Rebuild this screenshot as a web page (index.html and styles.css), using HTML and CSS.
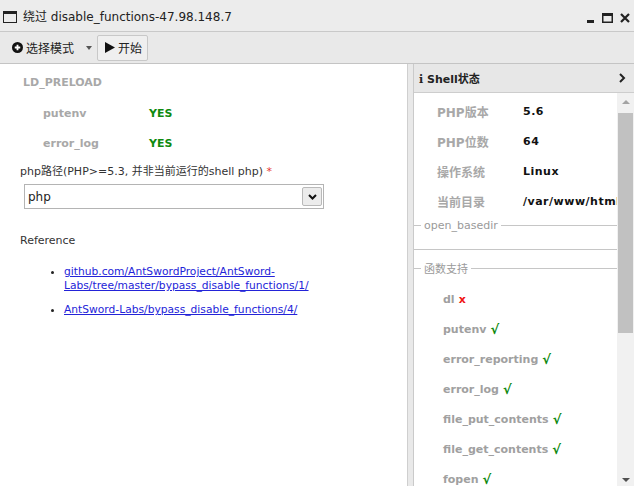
FILE: index.html
```html
<!DOCTYPE html>
<html lang="zh-CN">
<head>
    <meta charset="UTF-8">
    <title>绕过 disable_functions</title>
    <link rel="stylesheet" href="styles.css">
</head>
<body>
    <div class="window">
        <div class="titlebar">
            <svg class="win-icon" width="14" height="12" viewBox="0 0 14 12">
                <rect x="0.5" y="0.5" width="13" height="11" fill="none" stroke="#222"/>
                <rect x="0" y="0" width="14" height="3" fill="#222"/>
            </svg>
            <span class="title">绕过 disable_functions-47.98.148.7</span>
            <div class="controls">
                <svg width="8" height="10" viewBox="0 0 8 10"><rect x="0" y="7" width="7" height="3" fill="#222"/></svg>
                <svg width="11" height="10" viewBox="0 0 11 10">
                    <rect x="0.75" y="0.75" width="9.5" height="8.5" fill="none" stroke="#222" stroke-width="1.5"/>
                    <rect x="0" y="0" width="11" height="3" fill="#222"/>
                </svg>
                <svg width="10" height="10" viewBox="0 0 10 10"><path d="M1 1L9 9M9 1L1 9" stroke="#222" stroke-width="2.2"/></svg>
            </div>
        </div>

        <div class="toolbar">
            <div class="tb-menu">
                <svg width="11" height="11" viewBox="0 0 12 12">
                    <circle cx="6" cy="6" r="6" fill="#111"/>
                    <path d="M6 3v6M3 6h6" stroke="#fff" stroke-width="2"/>
                </svg>
                <span>选择模式</span>
                <span class="caret"></span>
            </div>
            <div class="tb-btn">
                <svg width="10" height="11" viewBox="0 0 10 11"><path d="M0 0L10 5.5L0 11Z" fill="#111"/></svg>
                <span>开始</span>
            </div>
        </div>

        <div class="main">
            <div class="left">
                <div class="section-title">LD_PRELOAD</div>
                <div class="check-row">
                    <span class="check-name">putenv</span>
                    <span class="yes">YES</span>
                </div>
                <div class="check-row">
                    <span class="check-name">error_log</span>
                    <span class="yes">YES</span>
                </div>

                <div class="field-label">php路径(PHP&gt;=5.3, 并非当前运行的shell php) <span class="req">*</span></div>
                <div class="select">
                    <span>php</span>
                    <span class="select-btn">
                        <svg width="9" height="6" viewBox="0 0 9 6"><path d="M1 1L4.5 4.5L8 1" fill="none" stroke="#111" stroke-width="2"/></svg>
                    </span>
                </div>

                <div class="ref-title">Reference</div>
                <ul class="ref-list">
                    <li><a href="#">github.com/AntSwordProject/AntSword-<br>Labs/tree/master/bypass_disable_functions/1/</a></li>
                    <li><a href="#">AntSword-Labs/bypass_disable_functions/4/</a></li>
                </ul>
            </div>

            <div class="splitter"></div>

            <div class="right">
                <div class="panel-head">
                    <span class="panel-title"><b class="info">i</b> Shell状态</span>
                    <svg width="7" height="10" viewBox="0 0 7 10"><path d="M1 1L5 5L1 9" fill="none" stroke="#222" stroke-width="2"/></svg>
                </div>
                <div class="panel-body">
                    <div class="panel-content">
                        <div class="info-row"><span class="info-key">PHP版本</span><span class="info-val">5.6</span></div>
                        <div class="info-row"><span class="info-key">PHP位数</span><span class="info-val">64</span></div>
                        <div class="info-row"><span class="info-key">操作系统</span><span class="info-val">Linux</span></div>
                        <div class="info-row"><span class="info-key">当前目录</span><span class="info-val">/var/www/html</span></div>

                        <div class="group">
                            <div class="legend"><span class="dash"></span><span>open_basedir</span><span class="line"></span></div>
                            <div class="group-body"></div>
                        </div>

                        <div class="group funcs">
                            <div class="legend"><span class="dash"></span><span>函数支持</span><span class="line"></span></div>
                            <div class="func"><span>dl</span> <b class="no">x</b></div>
                            <div class="func"><span>putenv</span> <b class="ok">√</b></div>
                            <div class="func"><span>error_reporting</span> <b class="ok">√</b></div>
                            <div class="func"><span>error_log</span> <b class="ok">√</b></div>
                            <div class="func"><span>file_put_contents</span> <b class="ok">√</b></div>
                            <div class="func"><span>file_get_contents</span> <b class="ok">√</b></div>
                            <div class="func"><span>fopen</span> <b class="ok">√</b></div>
                        </div>
                    </div>
                    <div class="scrollbar">
                        <span class="arrow up"></span>
                        <div class="track"><div class="thumb"></div></div>
                        <span class="arrow down"></span>
                    </div>
                </div>
            </div>
        </div>
    </div>
</body>
</html>
```

FILE: styles.css
```css
* {
    margin: 0;
    padding: 0;
    box-sizing: border-box;
}

body {
    font-family: 'DejaVu Sans', 'Noto Sans CJK SC', sans-serif;
    font-size: 11px;
    color: #222;
    background: #fff;
}

.window {
    width: 634px;
    height: 486px;
    display: flex;
    flex-direction: column;
    overflow: hidden;
}

/* title bar */
.titlebar {
    height: 32px;
    flex: none;
    display: flex;
    align-items: center;
    background-color: #ececec;
    border-bottom: 1px solid #c9c9c9;
    padding: 0 4px 0 3px;
}

.win-icon {
    margin-top: 2px;
}

.title {
    margin-left: 6px;
    font-size: 12px;
    color: #222;
}

.controls {
    margin-left: auto;
    display: flex;
    align-items: flex-end;
    gap: 7px;
    padding-top: 4px;
}

/* toolbar */
.toolbar {
    height: 32px;
    flex: none;
    display: flex;
    align-items: center;
    background-color: #e9e9e9;
    border-bottom: 1px solid #c4c4c4;
    padding-left: 12px;
    font-size: 12px;
}

.tb-menu {
    display: flex;
    align-items: center;
    gap: 3px;
}

.caret {
    width: 0;
    height: 0;
    border-left: 3.5px solid transparent;
    border-right: 3.5px solid transparent;
    border-top: 4px solid #555;
    margin: 1px 0 0 9px;
}

.tb-btn {
    margin-left: 5px;
    height: 26px;
    display: flex;
    align-items: center;
    gap: 3px;
    padding: 0 5px 0 7px;
    background-color: #efefef;
    border: 1px solid #c8c8c8;
    border-radius: 2px;
}

/* main area */
.main {
    flex: 1;
    display: flex;
    min-height: 0;
}

.left {
    width: 408px;
    flex: none;
    border-right: 1px solid #cfcfcf;
    padding: 4px 0 0 20px;
}

.section-title {
    height: 30px;
    line-height: 30px;
    padding-left: 3px;
    font-weight: bold;
    color: #a8a8a8;
}

.check-row {
    height: 30px;
    display: flex;
    align-items: center;
    padding-left: 23px;
    font-weight: bold;
}

.check-name {
    width: 106px;
    color: #a8a8a8;
}

.yes {
    color: #0f8a0f;
}

.field-label {
    margin-top: 6px;
    line-height: 16px;
    color: #333;
}

.req {
    color: #e53935;
}

.select {
    margin: 4px 0 0 4px;
    width: 300px;
    height: 25px;
    border: 1px solid #b4b4b4;
    display: flex;
    align-items: center;
    justify-content: space-between;
    padding: 0 1px 0 3px;
    font-size: 12px;
}

.select-btn {
    width: 20px;
    height: 19px;
    display: flex;
    align-items: center;
    justify-content: center;
    background-color: #ececec;
    border: 1px solid #b9b9b9;
    border-radius: 2px;
}

.ref-title {
    margin-top: 24px;
    line-height: 16px;
    color: #333;
}

.ref-list {
    margin-top: 16px;
    padding-left: 44px;
    line-height: 14px;
    font-size: 10.7px;
}

.ref-list li {
    margin-bottom: 10px;
}

.ref-list a {
    color: #2323d8;
}

.splitter {
    width: 5px;
    flex: none;
    background-color: #e9e9e9;
}

.right {
    flex: 1;
    display: flex;
    flex-direction: column;
    border-left: 1px solid #cacaca;
    min-width: 0;
}

.panel-head {
    height: 29px;
    flex: none;
    display: flex;
    align-items: center;
    justify-content: space-between;
    padding: 0 8px 0 5px;
    background-color: #e7e7e7;
    border-bottom: 1px solid #cdcdcd;
}

.panel-title {
    font-weight: bold;
    font-size: 11px;
}

.info {
    font-family: 'DejaVu Serif', serif;
}

.panel-body {
    flex: 1;
    display: flex;
    min-height: 0;
}

.panel-content {
    flex: 1;
    min-width: 0;
    overflow: hidden;
    padding-top: 3px;
}

.info-row {
    height: 30px;
    display: flex;
    align-items: center;
    padding-left: 23px;
    font-weight: bold;
    white-space: nowrap;
}

.info-key {
    width: 86px;
    flex: none;
    color: #a8a8a8;
    font-size: 12px;
}

.info-val {
    color: #111;
    letter-spacing: 0.5px;
}

.group {
    margin-top: 1px;
    border-bottom: 1px solid #c6c6c6;
}

.group-body {
    height: 16px;
}

.legend {
    height: 16px;
    display: flex;
    align-items: center;
    gap: 3px;
    color: #9a9a9a;
}

.dash {
    width: 7px;
    border-top: 1px solid #c6c6c6;
}

.line {
    flex: 1;
    border-top: 1px solid #c6c6c6;
}

.funcs {
    margin-top: 10px;
    border-bottom: none;
}

.funcs .legend {
    margin-bottom: 8px;
}

.func {
    height: 30px;
    display: flex;
    align-items: center;
    gap: 4px;
    padding-left: 29px;
    font-weight: bold;
    color: #a0a0a0;
}

.ok {
    color: #0f8a0f;
    font-size: 13px;
}

.no {
    color: #f01414;
}

/* fake scrollbar */
.scrollbar {
    width: 17px;
    flex: none;
    display: flex;
    flex-direction: column;
    align-items: center;
    background-color: #f1f1f1;
}

.arrow {
    width: 0;
    border-left: 4px solid transparent;
    border-right: 4px solid transparent;
}

.arrow.up {
    height: 0;
    margin: 7px 0 9px;
    border-bottom: 4px solid #a3a3a3;
}

.arrow.down {
    height: 0;
    margin: 6px 0 4px;
    border-top: 4px solid #505050;
}

.track {
    flex: 1;
    width: 100%;
    padding: 0 1px;
}

.thumb {
    height: 220px;
    background-color: #c1c1c1;
}
```
